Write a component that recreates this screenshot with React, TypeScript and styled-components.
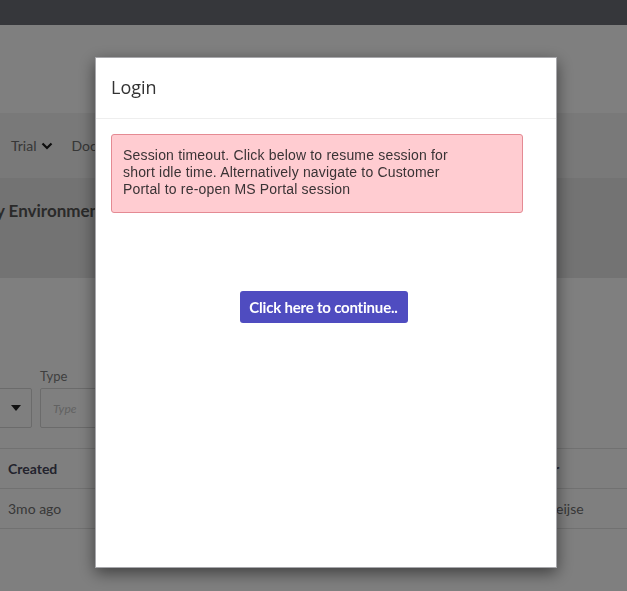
import React from "react";
import styled, { createGlobalStyle } from "styled-components";

const Global = createGlobalStyle`
  html, body { margin: 0; padding: 0; }
  body {
    width: 627px;
    height: 591px;
    overflow: hidden;
    background: #ffffff;
    font-family: Lato, "Liberation Sans", sans-serif;
  }
`;

const Page = styled.div`
  width: 627px;
  height: 591px;
  overflow: hidden;
  display: flex;
  flex-direction: column;
  background: #ffffff;
`;

const TopBar = styled.div`
  height: 25px;
  flex: none;
  background: #6c6e76;
`;

const Masthead = styled.div`
  height: 88px;
  flex: none;
  background: #ffffff;
`;

const NavBar = styled.nav`
  height: 65px;
  flex: none;
  background: #f2f2f2;
  display: flex;
  align-items: center;
  gap: 18px;
  padding-left: 11px;
  font-size: 14px;
  color: #6e6e6e;
`;

const NavItem = styled.span`
  display: inline-flex;
  align-items: center;
  gap: 5px;
`;

const EnvBand = styled.div`
  height: 100px;
  flex: none;
  background: #e6e6e6;
  display: flex;
  align-items: flex-start;
  padding-top: 22px;
  box-sizing: border-box;
`;

const EnvTitle = styled.h2`
  margin: 0 0 0 -20px;
  font-size: 17px;
  font-weight: 700;
  color: #555555;
  white-space: nowrap;
`;

const Content = styled.div`
  display: flex;
  flex-direction: column;
  padding-top: 90px;
`;

const Filters = styled.div`
  display: flex;
  gap: 8px;
  margin-left: -100px;
`;

const Field = styled.div<{ $w: number }>`
  display: flex;
  flex-direction: column;
  gap: 4px;
  width: ${(p) => p.$w}px;
`;

const Label = styled.label`
  font-size: 13px;
  color: #7e7e7e;
  height: 16px;
  line-height: 16px;
`;

const Box = styled.div`
  height: 40px;
  box-sizing: border-box;
  border: 1px solid #d6d6d6;
  border-radius: 2px;
  background: #fff;
  display: flex;
  align-items: center;
  padding: 0 12px;
`;

const SelectBox = styled(Box)`
  justify-content: flex-end;
  padding-right: 10px;
`;

const Placeholder = styled.span`
  font-style: italic;
  font-size: 12px;
  color: #c4c4c4;
`;

const Table = styled.div`
  margin-top: 20px;
  display: flex;
  flex-direction: column;
`;

const Row = styled.div<{ $head?: boolean }>`
  height: 39px;
  display: grid;
  grid-template-columns: 516px 1fr;
  align-items: center;
  border-top: 1px solid #e2e2e2;
  font-size: 14px;
  font-weight: ${(p) => (p.$head ? 700 : 400)};
  color: ${(p) => (p.$head ? "#46465a" : "#707070")};
  &:last-child { border-bottom: 1px solid #e2e2e2; }
`;

const Cell = styled.span<{ $pad?: number }>`
  padding-left: ${(p) => p.$pad ?? 8}px;
  white-space: nowrap;
`;

const Overlay = styled.div`
  position: fixed;
  inset: 0;
  background: rgba(0, 0, 0, 0.5);
`;

const Modal = styled.div`
  position: absolute;
  left: 95px;
  top: 57px;
  width: 462px;
  height: 511px;
  box-sizing: border-box;
  background: #fff;
  border: 1px solid #a8a8ac;
  box-shadow: 0 5px 15px rgba(0, 0, 0, 0.5);
  display: flex;
  flex-direction: column;
`;

const ModalHeader = styled.div`
  height: 61px;
  flex: none;
  box-sizing: border-box;
  border-bottom: 1px solid #eeeeee;
  display: flex;
  align-items: center;
  padding: 0 15px;
`;

const Title = styled.h4`
  margin: 0 0 2px 0;
  font-family: "Open Sans", "Liberation Sans", sans-serif;
  font-size: 18px;
  font-weight: 400;
  color: #333;
`;

const ModalBody = styled.div`
  padding: 15px 33px 0 15px;
  display: flex;
  flex-direction: column;
`;

const Alert = styled.div`
  box-sizing: border-box;
  height: 79px;
  background: #ffccd1;
  border: 1px solid #e48a93;
  border-radius: 3px;
  padding: 12px 11px;
  font-family: "Liberation Sans", Arial, sans-serif;
  font-size: 14px;
  line-height: 17px;
  letter-spacing: 0.18px;
  color: #3a3335;
`;

const Actions = styled.div`
  display: flex;
  justify-content: center;
  margin-top: 78px;
  padding-left: 13px;
`;

const Button = styled.button`
  height: 32px;
  width: 168px;
  border: none;
  border-radius: 3px;
  background: #4f4cc0;
  color: #fff;
  font-family: Lato, "Liberation Sans", sans-serif;
  font-weight: 700;
  font-size: 15px;
  letter-spacing: -0.2px;
  cursor: pointer;
`;

const Chevron = () => (
  <svg width="12" height="8" viewBox="0 0 12 8">
    <path d="M1.5 1.5 L6 6 L10.5 1.5" fill="none" stroke="#1a1a1a" strokeWidth="2.2" />
  </svg>
);

const Caret = () => (
  <svg width="10" height="6" viewBox="0 0 10 6">
    <path d="M0 0 H10 L5 6 Z" fill="#222" />
  </svg>
);

export default function App() {
  return (
    <>
      <Global />
      <Page>
        <TopBar />
        <Masthead />
        <NavBar>
          <NavItem>
            Trial <Chevron />
          </NavItem>
          <NavItem>Docs</NavItem>
        </NavBar>
        <EnvBand>
          <EnvTitle>My Environments</EnvTitle>
        </EnvBand>
        <Content>
          <Filters>
            <Field $w={132}>
              <Label>&nbsp;</Label>
              <SelectBox>
                <Caret />
              </SelectBox>
            </Field>
            <Field $w={200}>
              <Label>Type</Label>
              <Box>
                <Placeholder>Type</Placeholder>
              </Box>
            </Field>
          </Filters>
          <Table>
            <Row $head>
              <Cell>Created</Cell>
              <Cell $pad={0}>Owner</Cell>
            </Row>
            <Row>
              <Cell>3mo ago</Cell>
              <Cell $pad={0}>Bart Heijse</Cell>
            </Row>
          </Table>
        </Content>
      </Page>
      <Overlay>
        <Modal>
          <ModalHeader>
            <Title>Login</Title>
          </ModalHeader>
          <ModalBody>
            <Alert>
              Session timeout. Click below to resume session for
              <br />
              short idle time. Alternatively navigate to Customer
              <br />
              Portal to re-open MS Portal session
            </Alert>
            <Actions>
              <Button>Click here to continue..</Button>
            </Actions>
          </ModalBody>
        </Modal>
      </Overlay>
    </>
  );
}
